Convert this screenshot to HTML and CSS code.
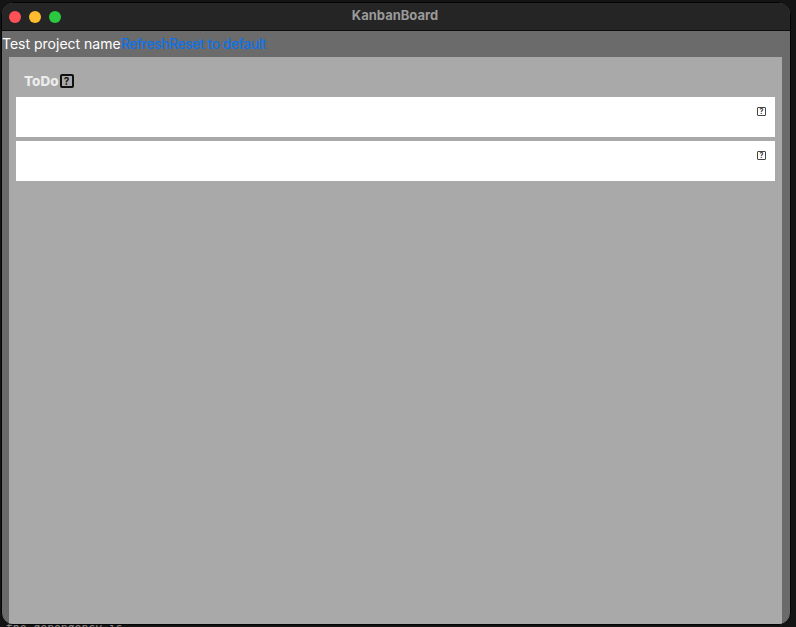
FILE: index.html
```html
<!DOCTYPE html>
<html lang="en">
<head>
    <meta charset="UTF-8">
    <meta name="viewport" content="width=device-width, initial-scale=1.0">
    <title>KanbanBoard</title>
    <link rel="stylesheet" href="styles.css">
</head>
<body>

    <!-- App window -->
    <div class="window">
        <div class="titlebar">
            <div class="lights">
                <span class="light red"></span>
                <span class="light yellow"></span>
                <span class="light green"></span>
            </div>
            <div class="window-title">KanbanBoard</div>
        </div>

        <div class="content">
            <div class="toolbar">
                <span class="project-name">Test project name</span>
                <a class="link" href="#">Refresh</a>
                <a class="link" href="#">Reset to default</a>
            </div>

            <div class="column">
                <div class="column-head">
                    <h2 class="column-name">ToDo</h2>
                    <span class="help help-large">?</span>
                </div>
                <div class="card"><span class="help help-small">?</span></div>
                <div class="card"><span class="help help-small">?</span></div>
            </div>
        </div>
    </div>

    <!-- Terminal text behind the window -->
    <div class="behind">the dependency is</div>

</body>
</html>
```

FILE: styles.css
```css
* {
    margin: 0;
    padding: 0;
    box-sizing: border-box;
}

html, body {
    height: 100%;
    overflow: hidden;
}

body {
    background: #141414;
    font-family: "Inter", "Liberation Sans", sans-serif;
}

/* Window frame */
.window {
    width: 790px;
    height: 623px;
    margin: 2px 0 0 1px;
    border: 1px solid #050505;
    border-radius: 12px;
    overflow: hidden;
    display: flex;
    flex-direction: column;
    background: #6b6b6b;
}

.titlebar {
    height: 28px;
    flex-shrink: 0;
    background: #252525;
    border-bottom: 1px solid #0c0c0c;
    display: flex;
    align-items: center;
    position: relative;
}

.lights {
    display: flex;
    gap: 8px;
    padding-left: 7px;
}

.light {
    width: 12px;
    height: 12px;
    border-radius: 50%;
}

.red { background: #ff5257; }
.yellow { background: #febc2e; }
.green { background: #2ac93f; }

.window-title {
    position: absolute;
    left: 0;
    right: 0;
    top: 5px;
    text-align: center;
    padding-right: 2px;
    font-size: 13px;
    font-weight: 700;
    line-height: 15px;
    color: #9a9a9a;
}

.content {
    flex: 1;
    display: flex;
    flex-direction: column;
    min-height: 0;
}

/* Project name and links */
.toolbar {
    height: 26px;
    flex-shrink: 0;
    display: flex;
    align-items: center;
    font-size: 14px;
    padding-bottom: 1px;
}

.project-name {
    color: #fff;
}

.link {
    color: #0f72e5;
    font-weight: 500;
    text-decoration: none;
    letter-spacing: -0.5px;
}

/* Column */
.column {
    flex: 1;
    margin: 0 8px 0 7px;
    padding: 12px 7px 0 7px;
    background: #a9a9a9;
}

.column-head {
    height: 24px;
    display: flex;
    align-items: center;
    gap: 1px;
    padding-left: 8px;
    margin-bottom: 4px;
}

.column-name {
    font-size: 13.5px;
    font-weight: 800;
    color: #ececec;
}

.card {
    height: 40px;
    margin-bottom: 4px;
    background: #fff;
    display: flex;
    justify-content: flex-end;
    align-items: flex-start;
    padding: 10px 9px 0 0;
}

/* Question mark button */
.help {
    display: flex;
    align-items: center;
    justify-content: center;
    font-weight: 700;
    border-style: solid;
}

.help-large {
    width: 14px;
    height: 14px;
    border-width: 2px;
    border-color: #111;
    border-radius: 2px;
    font-size: 10px;
    color: #111;
}

.help-small {
    width: 9px;
    height: 9px;
    border-width: 1px;
    border-color: #444;
    border-radius: 1px;
    font-size: 7px;
    color: #333;
}

.behind {
    position: absolute;
    left: 6px;
    top: 622px;
    font-family: "DejaVu Sans Mono", monospace;
    font-size: 11.4px;
    line-height: 13px;
    color: #8a8a8a;
    z-index: -1;
}
```
